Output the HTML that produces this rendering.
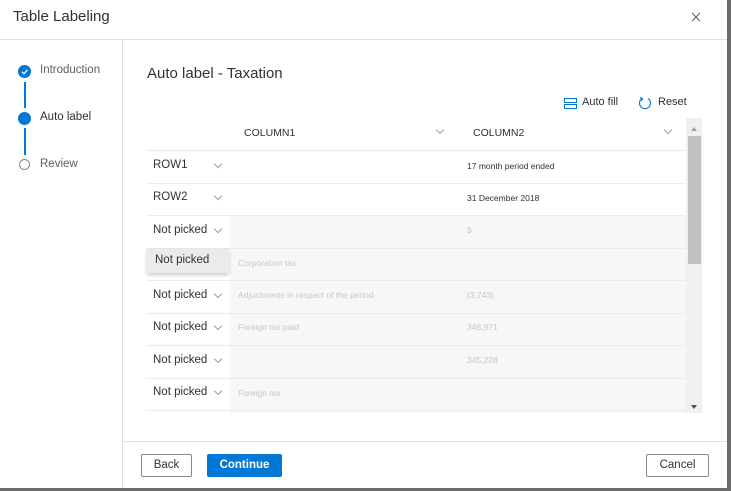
<!DOCTYPE html>
<html><head><style>
*{margin:0;padding:0;box-sizing:border-box}
body{width:731px;height:491px;background:#fff;font-family:"Segoe UI","Liberation Sans",sans-serif;color:#323130;position:relative;overflow:hidden}
.a{position:absolute}
.t{font-size:11.5px;color:#323130}
.g{font-size:8.5px;color:#c8c6c4}
.c{font-size:8.5px;color:#323130}
.hl{position:absolute;left:146px;width:540px;height:1px;background:#edebe9}
.chev{position:absolute;width:6px;height:6px;border-right:1px solid #a19f9d;border-bottom:1px solid #a19f9d;transform:rotate(45deg)}
.btn{position:absolute;height:23px;border:1px solid #8a8886;border-radius:2px;font-size:11.5px;text-align:center;line-height:21px;background:#fff}
</style></head><body>
<div class="a" style="left:13px;top:8px;font-size:15px">Table Labeling</div>
<svg class="a" style="left:691px;top:12px" width="10" height="10"><path d="M1 1L9 9M9 1L1 9" stroke="#605e5c" stroke-width="1"/></svg>
<div class="a" style="left:0;top:39px;width:727px;height:1px;background:#e1dfdd"></div>
<div class="a" style="left:122px;top:40px;width:1px;height:448px;background:#e1dfdd"></div>
<div class="a" style="left:18px;top:65px;width:13px;height:13px;border-radius:50%;background:#0078d4"></div>
<svg class="a" style="left:18px;top:65px" width="13" height="13"><path d="M4 6.8l2 2 3.5-4" stroke="#fff" stroke-width="1.3" fill="none"/></svg>
<div class="a" style="left:24px;top:82px;width:2px;height:26px;background:#0078d4"></div>
<div class="a" style="left:18px;top:112px;width:13px;height:13px;border-radius:50%;background:#0078d4"></div>
<div class="a" style="left:24px;top:128px;width:2px;height:27px;background:#0078d4"></div>
<div class="a" style="left:19px;top:159px;width:11px;height:11px;border-radius:50%;border:1px solid #8a8886"></div>
<div class="a t" style="left:40px;top:64px;color:#605e5c">Introduction</div>
<div class="a t" style="left:40px;top:111px">Auto label</div>
<div class="a t" style="left:40px;top:158px;color:#605e5c">Review</div>
<div class="a" style="left:147px;top:65px;font-size:15px">Auto label - Taxation</div>
<svg class="a" style="left:564px;top:98px" width="13" height="11"><rect x="0.5" y="0.5" width="12" height="4" fill="none" stroke="#0078d4"/><rect x="0.5" y="6.5" width="12" height="4" fill="none" stroke="#0078d4"/></svg>
<div class="a t" style="left:582px;top:96px;font-size:11px">Auto fill</div>
<svg class="a" style="left:638px;top:96px" width="14" height="14"><path d="M4 2.5A5.5 5.5 0 1 0 10 2.5" fill="none" stroke="#0078d4" stroke-width="1.1"/><path d="M2 1.5l2.5 1-1 2.5" fill="none" stroke="#0078d4"/></svg>
<div class="a t" style="left:658px;top:96px;font-size:11px">Reset</div>
<div class="a" style="left:230px;top:215px;width:456px;height:198px;background:#f8f7f6"></div>
<div class="a" style="left:686px;top:118px;width:16px;height:295px;background:#f0f0f0"></div>
<div class="a" style="left:688px;top:136px;width:13px;height:128px;background:#c1c1c1"></div>
<div class="a" style="left:691px;top:127px;border:3.5px solid transparent;border-bottom:4px solid #a3a3a3;border-top:0"></div>
<div class="a" style="left:691px;top:405px;border:3.5px solid transparent;border-top:4px solid #505050;border-bottom:0"></div>
<div class="a t" style="left:244px;top:127px;font-size:10.5px">COLUMN1</div>
<div class="chev" style="left:437px;top:127px"></div>
<div class="a t" style="left:473px;top:127px;font-size:10.5px">COLUMN2</div>
<div class="chev" style="left:665px;top:127px"></div>
<div class="hl" style="top:150px"></div><div class="hl" style="top:183px"></div><div class="hl" style="top:215px"></div><div class="hl" style="top:248px"></div><div class="hl" style="top:280px"></div><div class="hl" style="top:313px"></div><div class="hl" style="top:345px"></div><div class="hl" style="top:378px"></div><div class="hl" style="top:410px"></div>
<div class="a t" style="left:153px;top:159px">ROW1</div><div class="chev" style="left:215px;top:161px"></div>
<div class="a t" style="left:153px;top:191px">ROW2</div><div class="chev" style="left:215px;top:193px"></div>
<div class="a t" style="left:153px;top:224px">Not picked</div><div class="chev" style="left:215px;top:226px"></div>
<div class="a t" style="left:153px;top:289px">Not picked</div><div class="chev" style="left:215px;top:291px"></div>
<div class="a t" style="left:153px;top:321px">Not picked</div><div class="chev" style="left:215px;top:323px"></div>
<div class="a t" style="left:153px;top:354px">Not picked</div><div class="chev" style="left:215px;top:356px"></div>
<div class="a t" style="left:153px;top:386px">Not picked</div><div class="chev" style="left:215px;top:388px"></div>
<div class="a" style="left:147px;top:249px;width:82px;height:24px;background:#edebe9;box-shadow:0 2px 4px rgba(0,0,0,.2)"></div>
<div class="a t" style="left:155px;top:254px">Not picked</div>
<div class="a c" style="left:467px;top:161px">17 month period ended</div>
<div class="a c" style="left:467px;top:193px">31 December 2018</div>
<div class="a g" style="left:467px;top:225px">$</div>
<div class="a g" style="left:238px;top:258px">Corporation tax</div>
<div class="a g" style="left:238px;top:290px">Adjustments in respect of the period</div>
<div class="a g" style="left:467px;top:290px">(3,743)</div>
<div class="a g" style="left:238px;top:322px">Foreign tax paid</div>
<div class="a g" style="left:467px;top:322px">348,971</div>
<div class="a g" style="left:467px;top:355px">345,228</div>
<div class="a g" style="left:238px;top:388px">Foreign tax</div>
<div class="a" style="left:123px;top:441px;width:604px;height:1px;background:#e1dfdd"></div>
<div class="btn" style="left:141px;top:454px;width:51px">Back</div>
<div class="btn" style="left:207px;top:454px;width:75px;background:#0078d4;border-color:#0078d4;color:#fff;font-weight:600">Continue</div>
<div class="btn" style="left:646px;top:454px;width:63px">Cancel</div>
<div class="a" style="left:727px;top:0;width:4px;height:491px;background:#6b6b6b"></div>
<div class="a" style="left:0;top:488px;width:731px;height:3px;background:#6b6b6b"></div>
</body></html>
